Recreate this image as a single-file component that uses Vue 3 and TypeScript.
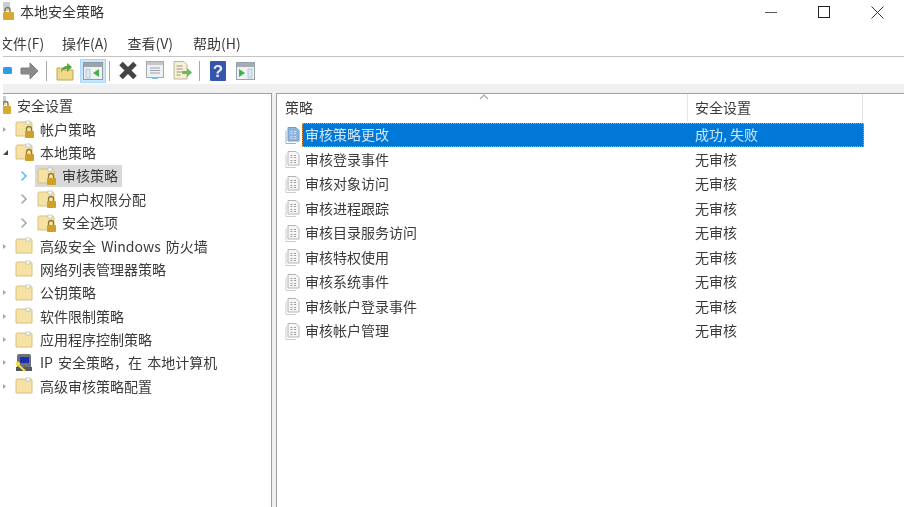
<script setup lang="ts">
interface TreeRow { label: string; indent: number; icon: 'lock' | 'folder' | 'ip' | 'root'; arrow: '' | 'small' | 'open' | 'big' | 'active'; selected?: boolean }
const tree: TreeRow[] = [
  { label: '安全设置', indent: 0, icon: 'root', arrow: '' },
  { label: '帐户策略', indent: 1, icon: 'lock', arrow: 'small' },
  { label: '本地策略', indent: 1, icon: 'lock', arrow: 'open' },
  { label: '审核策略', indent: 2, icon: 'lock', arrow: 'active', selected: true },
  { label: '用户权限分配', indent: 2, icon: 'lock', arrow: 'big' },
  { label: '安全选项', indent: 2, icon: 'lock', arrow: 'big' },
  { label: '高级安全 Windows 防火墙', indent: 1, icon: 'folder', arrow: 'small' },
  { label: '网络列表管理器策略', indent: 1, icon: 'folder', arrow: '' },
  { label: '公钥策略', indent: 1, icon: 'folder', arrow: 'small' },
  { label: '软件限制策略', indent: 1, icon: 'folder', arrow: 'small' },
  { label: '应用程序控制策略', indent: 1, icon: 'folder', arrow: 'small' },
  { label: 'IP 安全策略，在 本地计算机', indent: 1, icon: 'ip', arrow: 'small' },
  { label: '高级审核策略配置', indent: 1, icon: 'folder', arrow: 'small' },
]
const rows = [
  ['审核策略更改', '成功, 失败'],
  ['审核登录事件', '无审核'],
  ['审核对象访问', '无审核'],
  ['审核进程跟踪', '无审核'],
  ['审核目录服务访问', '无审核'],
  ['审核特权使用', '无审核'],
  ['审核系统事件', '无审核'],
  ['审核帐户登录事件', '无审核'],
  ['审核帐户管理', '无审核'],
]
const menus = ['文件(F)', '操作(A)', '查看(V)', '帮助(H)']
</script>

<template>
  <div class="win">
    <header class="title">
      <svg class="title-icon" width="13" height="20" viewBox="0 0 13 20">
        <rect x="0" y="0" width="7" height="9" fill="#c9ced6" />
        <path d="M2 10V8a2.500 2.500 0 0 1 5 0v2" fill="none" stroke="#8a7a45" stroke-width="1.400" />
        <rect x="0" y="10" width="11" height="8" rx="1" fill="#d6a92f" />
      </svg>
      <span class="title-text">本地安全策略</span>
      <div class="caption">
        <svg width="12" height="12" viewBox="0 0 12 12"><path d="M0 6.500h12" stroke="#555" /></svg>
        <svg width="12" height="12" viewBox="0 0 12 12"><rect x=".5" y=".5" width="11" height="11" fill="none" stroke="#222" /></svg>
        <svg width="13" height="13" viewBox="0 0 13 13"><path d="M.5.500l12 12M12.500.500l-12 12" stroke="#333" /></svg>
      </div>
    </header>

    <nav class="menu">
      <span v-for="m in menus" :key="m">{{ m }}</span>
    </nav>

    <div class="toolbar">
      <svg class="back" width="9" height="12" viewBox="0 0 9 12"><rect y="2" width="9" height="7" rx="1.500" fill="#2f9be8" /></svg>
      <svg class="tool fwd" width="19" height="18" viewBox="0 0 19 18"><path d="M1 6h9V1l8 8-8 8v-5H1z" fill="#8b8b8b" stroke="#808080" /></svg>
      <i class="sep" />
      <svg class="tool up" width="18" height="20" viewBox="0 0 18 20">
        <path d="M1 7h6l1 2h9v10H1z" fill="#f0d98a" stroke="#c2a552" />
        <path d="M5 12c0-5 3-7 6-7V2l5 4-5 5V8c-3 0-5 1-6 4z" fill="#5aa83a" />
      </svg>
      <div class="tool-active">
        <svg width="20" height="18" viewBox="0 0 20 18">
          <rect x=".5" y=".5" width="19" height="17" fill="#eef2f5" stroke="#8f9aa3" />
          <rect x="1" y="1" width="18" height="4" fill="#9aa4ac" />
          <rect x="3" y="7" width="4" height="9" fill="#dbe7f1" stroke="#9fb2c2" stroke-width=".6" />
          <path d="M16 7v8l-6-4z" fill="#45b04a" />
        </svg>
      </div>
      <i class="sep" />
      <svg class="tool x" width="20" height="19" viewBox="0 0 20 19"><path d="M3 2.500l14 14M17 2.500l-14 14" stroke="#454545" stroke-width="5" /></svg>
      <svg class="tool prop" width="18" height="19" viewBox="0 0 18 19">
        <rect x=".5" y=".5" width="17" height="16" fill="#eef0f2" stroke="#a5aab0" />
        <rect x="1" y="1" width="16" height="3" fill="#c2c6cb" />
        <path d="M4 7h10M4 9.500h10M4 12h10" stroke="#9aa3af" />
        <rect x="6" y="16" width="6" height="2" fill="#6fc0ea" />
      </svg>
      <svg class="tool exp" width="19" height="19" viewBox="0 0 19 19">
        <path d="M1 .5h10l3 3V18H1z" fill="#f6efd8" stroke="#bdb59a" />
        <path d="M3.500 5h6M3.500 8h6M3.500 11h5M3.500 14h4" stroke="#9a957f" />
        <path d="M9 10h5V7l5 4.500-5 4.500v-3H9z" fill="#62bf58" />
      </svg>
      <i class="sep" />
      <svg class="tool help" width="16" height="20" viewBox="0 0 16 20">
        <rect width="16" height="20" rx="1" fill="#3456ad" />
        <text x="8" y="15.500" text-anchor="middle" class="qm">?</text>
      </svg>
      <svg class="tool show" width="19" height="18" viewBox="0 0 19 18">
        <rect x=".5" y=".5" width="18" height="17" fill="#eef2f5" stroke="#98a2aa" />
        <rect x="1" y="1" width="17" height="4" fill="#a4adb4" />
        <path d="M3 7v8l6-4z" fill="#45b04a" />
        <rect x="12" y="7" width="4" height="9" fill="#dbe7f1" stroke="#9fb2c2" stroke-width=".6" />
      </svg>
    </div>

    <div class="strip" />

    <main class="panes">
      <section class="left">
        <div v-for="r in tree" :key="r.label" class="node" :class="'lv' + r.indent">
          <span class="arrow-slot">
            <svg v-if="r.arrow === 'small'" class="tiny" width="5" height="7" viewBox="0 0 5 7"><path d="M0 1l3 2.500-3 2.500z" fill="#a6a6a6" /></svg>
            <svg v-else-if="r.arrow === 'open'" class="tiny" width="7" height="7" viewBox="0 0 7 7"><path d="M5 1v5H0z" fill="#444" /></svg>
            <svg v-else-if="r.arrow === 'big'" width="8" height="12" viewBox="0 0 8 12"><path d="M1.500 1.500L6 6l-4.500 4.500" fill="none" stroke="#a6a6a6" stroke-width="1.600" /></svg>
            <svg v-else-if="r.arrow === 'active'" width="8" height="12" viewBox="0 0 8 12"><path d="M1.500 1.500L6 6l-4.500 4.500" fill="none" stroke="#4dc3f5" stroke-width="1.600" /></svg>
          </span>
          <span class="node-body" :class="{ sel: r.selected }">
            <svg v-if="r.icon === 'root'" class="rooticon" width="12" height="20" viewBox="0 0 12 20">
              <rect x="0" y="0" width="3" height="9" fill="#c9ced6" />
              <path d="M0 10V8a2.500 2.500 0 0 1 5 0v2" fill="none" stroke="#8a7a45" stroke-width="1.400" />
              <rect x="0" y="10" width="8" height="8" rx="1" fill="#d6a92f" />
            </svg>
            <svg v-else-if="r.icon === 'ip'" class="ico" width="20" height="18" viewBox="0 0 20 18">
              <rect x="2" y="0" width="14" height="16" rx="2" fill="#6d7278" />
              <rect x="5" y="3" width="9" height="6" fill="#1b2fb0" />
              <rect x="1" y="13" width="16" height="4" fill="#55595e" />
              <path d="M1 9l9 8" stroke="#f2e13a" stroke-width="2.200" />
              <circle cx="3" cy="9.500" r="2" fill="#f2e13a" />
            </svg>
            <svg v-else class="ico" width="20" height="18" viewBox="0 0 20 18">
              <path d="M1 3.500c0-.8.500-1.500 1.500-1.500h13c.8 0 1.500.7 1.500 1.500V16H1z" fill="#f6e2a4" stroke="#d8c07e" />
              <rect x="11" y="1" width="4" height="3" fill="#fff" stroke="#a8b4bd" stroke-width=".6" />
              <template v-if="r.icon === 'lock'">
                <path d="M11.500 11V9a2.500 2.500 0 0 1 5 0v2" fill="none" stroke="#8f7a35" stroke-width="1.300" />
                <rect x="10" y="11" width="9" height="7" rx=".8" fill="#cfa028" />
              </template>
            </svg>
            <span class="label">{{ r.label }}</span>
          </span>
        </div>
      </section>

      <div class="splitter" />

      <section class="right">
        <div class="head">
          <span class="col-a">策略</span>
          <svg class="sort" width="10" height="6" viewBox="0 0 10 6"><path d="M1 5l4-4 4 4" fill="none" stroke="#a8a8a8" stroke-width="1.200" /></svg>
          <span class="col-b">安全设置</span>
        </div>
        <div class="list">
          <div v-for="(r, i) in rows" :key="r[0]" class="row" :class="{ on: i === 0 }">
            <svg class="doc" width="16" height="17" viewBox="0 0 16 17">
              <path d="M3 .5h8l3 3V14H3z" :fill="i === 0 ? '#8fb4dc' : '#f6f6f6'" :stroke="i === 0 ? '#6f9ccb' : '#b4b4b4'" />
              <path d="M1 3.500v13h10" fill="none" :stroke="i === 0 ? '#8fb4dc' : '#cccccc'" />
              <path d="M5.500 4.500h2M9 4.500h2M5.500 6.500h2M9 6.500h2M5.500 9.500h2M9 9.500h2M5.500 11.500h2M9 11.500h2" :stroke="i === 0 ? '#cfe0f2' : '#a0a0a0'" />
            </svg>
            <div class="cells">
              <span class="cell-a">{{ r[0] }}</span>
              <span class="cell-b">{{ r[1] }}</span>
            </div>
          </div>
        </div>
      </section>
    </main>
  </div>
</template>

<style>
html, body { margin: 0; padding: 0; background: #fff; overflow: hidden; }
</style>

<style scoped>
.win {
  width: 904px;
  height: 507px;
  display: flex;
  flex-direction: column;
  overflow: hidden;
  background: #fff;
  color: #3a3a3a;
  font: 14px/20px "Noto Sans CJK SC", "Liberation Sans", sans-serif;
  filter: blur(.35px);
}
.title {
  height: 24px;
  flex: none;
  display: flex;
  align-items: center;
  padding-left: 3px;
  color: #333;
}
.title-icon { margin-right: 4px; }
.title-text { margin-top: -3px; }
.caption {
  margin-left: auto;
  display: flex;
  align-items: center;
  gap: 41px;
  padding-right: 20px;
}
.menu {
  height: 33px;
  flex: none;
  box-sizing: border-box;
  display: flex;
  align-items: center;
  margin-left: 3px;
  padding-top: 6px;
  border-bottom: 1px solid #c4c4c4;
  overflow: hidden;
}
.menu span { white-space: nowrap; flex: none; width: 65.5px; }
.menu span:first-child { margin-left: -4px; width: 63px; }
.toolbar {
  height: 27px;
  flex: none;
  display: flex;
  align-items: center;
  padding-left: 3px;
}
.back { margin-right: 8px; }
.fwd { margin-right: 7px; }
.sep { width: 1px; height: 20px; background: #a8a8a8; flex: none; }
.up { margin-left: 9px; margin-right: 6px; }
.tool-active {
  width: 26px;
  height: 24px;
  flex: none;
  box-sizing: border-box;
  display: flex;
  align-items: center;
  justify-content: center;
  background: #cce4f7;
  border: 1px solid #a9d8ff;
  margin-right: 3px;
}
.x { margin-left: 8px; margin-right: 8px; }
.prop { margin-right: 9px; }
.exp { margin-right: 7px; }
.help { margin-left: 10px; margin-right: 10px; }
.qm { font: 700 17px "Liberation Sans", sans-serif; fill: #e8eefc; }
.strip { height: 9px; flex: none; background: #f0f0f0; margin-left: 3px; }
.panes { flex: 1; display: flex; min-height: 0; padding-left: 3px; background: #fff; }
.left {
  width: 269px;
  flex: none;
  box-sizing: border-box;
  border-top: 1px solid #a0a0a0;
  border-right: 1px solid #a0a0a0;
  overflow: hidden;
}
.node { height: 23.4px; display: flex; align-items: center; white-space: nowrap; }
.arrow-slot { flex: none; display: flex; align-items: center; }
.lv0 .arrow-slot { width: 0; }
.lv1 .arrow-slot { width: 11px; justify-content: flex-start; }
.lv2 .arrow-slot { width: 32px; padding-left: 17px; box-sizing: border-box; }
.tiny { margin-left: 0; }
.node-body { display: flex; align-items: center; height: 22px; padding-right: 4px; }
.node-body.sel { background: #d9d9d9; }
.label { word-spacing: 2px; margin-top: -1px; }
.lv2 .node-body { padding-left: 2px; }
.ico { flex: none; margin-left: 1px; margin-right: 5px; }
.lv2 .ico { margin-left: 0; }
.rooticon { flex: none; margin-right: 2px; }
.splitter { width: 4px; flex: none; background: #f0f0f0; }
.right {
  flex: 1;
  min-width: 0;
  border-top: 1px solid #a0a0a0;
  border-left: 1px solid #a0a0a0;
}
.head {
  height: 28px;
  display: flex;
  align-items: center;
  position: relative;
  box-sizing: border-box;
}
.col-a { width: 411px; box-sizing: border-box; padding-left: 8px; border-right: 1px solid #e5e5e5; height: 28px; line-height: 26px; flex: none; }
.col-b { width: 175px; box-sizing: border-box; padding-left: 7px; border-right: 1px solid #e5e5e5; height: 28px; line-height: 26px; flex: none; }
.sort { position: absolute; left: 202px; top: 0; }
.list { margin-top: 1px; }
.row { height: 24.5px; display: flex; align-items: center; padding-left: 8px; }
.doc { flex: none; margin-right: 1px; }
.cells { width: 562px; height: 24px; display: flex; align-items: center; box-sizing: border-box; padding-left: 3px; padding-bottom: 2px; }
.cell-a { width: 390px; flex: none; }
.on .cells { background: #0078d7; color: #cfe6f8; outline: 1px dotted #e59a4a; outline-offset: -1px; }
</style>
